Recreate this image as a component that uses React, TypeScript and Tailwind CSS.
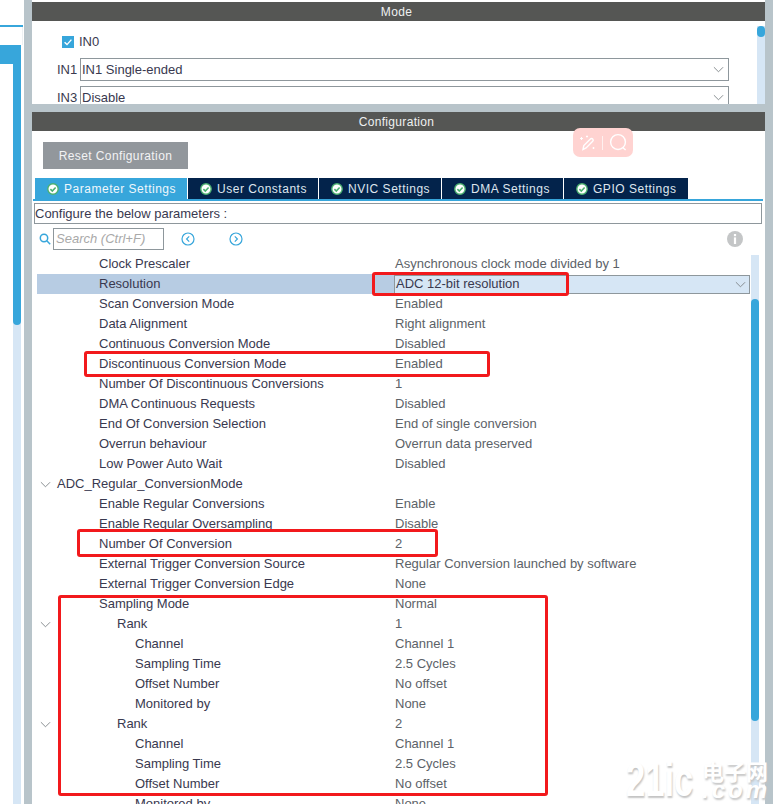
import React from "react";

type RowT = { label: string; value: string; indent: 0 | 1 | 2 | 3; chev?: boolean; selected?: boolean };

const rows: RowT[] = [
  { label: "Clock Prescaler", value: "Asynchronous clock mode divided by 1", indent: 1 },
  { label: "Resolution", value: "ADC 12-bit resolution", indent: 1, selected: true },
  { label: "Scan Conversion Mode", value: "Enabled", indent: 1 },
  { label: "Data Alignment", value: "Right alignment", indent: 1 },
  { label: "Continuous Conversion Mode", value: "Disabled", indent: 1 },
  { label: "Discontinuous Conversion Mode", value: "Enabled", indent: 1 },
  { label: "Number Of Discontinuous Conversions", value: "1", indent: 1 },
  { label: "DMA Continuous Requests", value: "Disabled", indent: 1 },
  { label: "End Of Conversion Selection", value: "End of single conversion", indent: 1 },
  { label: "Overrun behaviour", value: "Overrun data preserved", indent: 1 },
  { label: "Low Power Auto Wait", value: "Disabled", indent: 1 },
  { label: "ADC_Regular_ConversionMode", value: "", indent: 0, chev: true },
  { label: "Enable Regular Conversions", value: "Enable", indent: 1 },
  { label: "Enable Regular Oversampling", value: "Disable", indent: 1 },
  { label: "Number Of Conversion", value: "2", indent: 1 },
  { label: "External Trigger Conversion Source", value: "Regular Conversion launched by software", indent: 1 },
  { label: "External Trigger Conversion Edge", value: "None", indent: 1 },
  { label: "Sampling Mode", value: "Normal", indent: 1 },
  { label: "Rank", value: "1", indent: 2, chev: true },
  { label: "Channel", value: "Channel 1", indent: 3 },
  { label: "Sampling Time", value: "2.5 Cycles", indent: 3 },
  { label: "Offset Number", value: "No offset", indent: 3 },
  { label: "Monitored by", value: "None", indent: 3 },
  { label: "Rank", value: "2", indent: 2, chev: true },
  { label: "Channel", value: "Channel 1", indent: 3 },
  { label: "Sampling Time", value: "2.5 Cycles", indent: 3 },
  { label: "Offset Number", value: "No offset", indent: 3 },
  { label: "Monitored by", value: "None", indent: 3 },
];

const indentClass = { 0: "ml-0", 1: "ml-[42px]", 2: "ml-[60px]", 3: "ml-[78px]" };

function Chevron({ className }: { className: string }) {
  return (
    <svg viewBox="0 0 12 7" className={className} fill="none" stroke="#7f8589" strokeWidth="1">
      <path d="M1 1l5 5 5-5" />
    </svg>
  );
}

function TabCheck() {
  return (
    <svg viewBox="0 0 12 12" className="w-3 h-3 shrink-0">
      <circle cx="6" cy="6" r="5.2" fill="#ffffff" stroke="#4cb070" strokeWidth="1.4" />
      <path d="M3.4 6.1l1.9 1.9 3.3-3.5" fill="none" stroke="#4cb070" strokeWidth="1.6" />
    </svg>
  );
}

function Tab({ label, active, w }: { label: string; active?: boolean; w: string }) {
  return (
    <div
      className={`${w} h-[21px] flex items-center gap-[5px] pl-3 text-[12px] tracking-[0.52px] ${
        active ? "bg-[#37a6db] text-[#eef7fb]" : "bg-[#03234b] text-[#dfe6ee]"
      }`}
    >
      <TabCheck />
      <span className="whitespace-nowrap">{label}</span>
    </div>
  );
}

function ModeSelect({ text }: { text: string }) {
  return (
    <div className="flex-1 h-[23px] border border-[#8e979c] flex items-center justify-between pl-[1px] pr-[4px] shrink-0">
      <span>{text}</span>
      <Chevron className="w-[11px] h-[7px]" />
    </div>
  );
}

function Row({ r }: { r: RowT }) {
  return (
    <div className="flex h-5 items-center shrink-0">
      <div className={`w-[358px] h-5 flex items-center shrink-0 ${r.selected ? "bg-[#b7cce3]" : ""}`}>
        <div className="w-5 shrink-0 pl-[3px]">{r.chev && <Chevron className="w-[11px] h-[7px]" />}</div>
        <span className={`${indentClass[r.indent]} whitespace-nowrap text-[#39394f]`}>{r.label}</span>
      </div>
      {r.selected ? (
        <div className="w-[356px] -ml-[1px] h-[19px] bg-[#d6e6f5] border border-[#8e979c] flex items-center justify-between pl-[1px] pr-[3px] text-[#39394f]">
          <span className="whitespace-nowrap">{r.value}</span>
          <Chevron className="w-[11px] h-[7px]" />
        </div>
      ) : (
        <span className="whitespace-nowrap text-[#5c6268]">{r.value}</span>
      )}
    </div>
  );
}

function RedBox({ className }: { className: string }) {
  return <div className={`absolute border-[3px] border-[#f2191c] rounded-[3px] pointer-events-none ${className}`} />;
}

export default function App() {
  return (
    <div className="relative w-[781px] h-[804px] overflow-hidden bg-white flex font-['Liberation_Sans',Arial,sans-serif] text-[13px] text-[#39394f]">
      {/* left side panel */}
      <div className="w-6 h-full flex flex-col shrink-0">
        <div className="h-[25px] shrink-0" />
        <div className="h-[2px] w-[23px] bg-[#37a6db] shrink-0" />
        <div className="h-[18px] w-[23px] border-r border-[#eef1f3] shrink-0" />
        <div className="h-[19px] w-[21px] bg-[#37a6db] shrink-0" />
        <div className="flex-1 flex">
          <div className="w-[13px]" />
          <div className="w-2 flex flex-col bg-[#d6e6f5]">
            <div className="h-[261px] bg-[#37a6db] rounded-b-[4px]" />
          </div>
        </div>
      </div>
      <div className="w-2 h-full bg-[#b8c4ca] shrink-0" />

      {/* main column */}
      <div className="w-[733px] h-full flex flex-col shrink-0 overflow-hidden">
        {/* Mode */}
        <div className="h-[104px] shrink-0 flex flex-col pt-[2px] overflow-hidden">
          <div className="h-[19px] bg-[#555654] text-[#eef0f0] text-[12px] tracking-[0.32px] pr-[4px] flex items-center justify-center shrink-0">
            Mode
          </div>
          <div className="flex-1 flex min-h-0">
            <div className="flex-1 flex flex-col overflow-hidden min-w-0 pt-[15px] pl-[25px] pr-[28px]">
              <div className="flex items-center h-[12px] ml-[5px] gap-[5px] shrink-0">
                <div className="w-3 h-3 bg-[#37a6db] flex items-center justify-center">
                  <svg viewBox="0 0 12 12" className="w-3 h-3" fill="none" stroke="#ffffff" strokeWidth="1.4">
                    <path d="M2.6 6.2l2.4 2.4 4.4-5" />
                  </svg>
                </div>
                <span>IN0</span>
              </div>
              <div className="flex items-center gap-[3px] mt-[10px] shrink-0">
                <span className="w-5 whitespace-nowrap">IN1</span>
                <ModeSelect text="IN1 Single-ended" />
              </div>
              <div className="flex items-center gap-[3px] mt-[5px] shrink-0">
                <span className="w-5 whitespace-nowrap">IN3</span>
                <ModeSelect text="Disable" />
              </div>
            </div>
            <div className="w-2 mt-[5px] bg-[#d6e6f5] shrink-0">
              <div className="h-[11px] bg-[#37a6db] rounded-full" />
            </div>
          </div>
        </div>
        <div className="h-2 bg-[#b8c4ca] shrink-0" />

        {/* Configuration */}
        <div className="h-[19px] bg-[#555654] text-[#eef0f0] text-[12px] tracking-[0.32px] pr-[4px] flex items-center justify-center shrink-0">
          Configuration
        </div>
        <div className="flex-1 flex flex-col min-h-0 overflow-hidden">
          <div className="ml-[11px] mt-[11px] w-[145px] h-[27px] bg-[#92979c] text-[#f2f3f4] text-[12px] tracking-[0.4px] flex items-center justify-center shrink-0">
            Reset Configuration
          </div>
          <div className="flex ml-[3px] mt-[9px] gap-[1px] shrink-0">
            <Tab label="Parameter Settings" active w="w-[152px]" />
            <Tab label="User Constants" w="w-[130px]" />
            <Tab label="NVIC Settings" w="w-[122px]" />
            <Tab label="DMA Settings" w="w-[121px]" />
            <Tab label="GPIO Settings" w="w-[124px]" />
          </div>
          <div className="ml-[1px] w-[730px] h-[2px] bg-[#37a6db] shrink-0" />
          <div className="ml-[2px] w-[728px] h-[21px] mt-[2px] border border-[#8e979c] flex items-center text-[#39394f] shrink-0">
            Configure the below parameters :
          </div>
          <div className="h-[25px] flex items-center shrink-0 mt-[2px]">
            <svg viewBox="0 0 12 12" className="w-3 h-3 ml-[7px]" fill="none" stroke="#37a6db" strokeWidth="1.5">
              <circle cx="5" cy="5" r="3.7" />
              <path d="M7.8 7.8l3.4 3.4" />
            </svg>
            <div className="w-[111px] h-[22px] ml-[2px] border border-[#8e979c] flex items-center pl-[2px] italic text-[#a9a9a9]">
              Search (Ctrl+F)
            </div>
            <svg viewBox="0 0 14 14" className="w-[14px] h-[14px] ml-[17px]" fill="none" stroke="#37a6db" strokeWidth="1.2">
              <circle cx="7" cy="7" r="6" />
              <path d="M8.2 4.4L5.6 7l2.6 2.6" />
            </svg>
            <svg viewBox="0 0 14 14" className="w-[14px] h-[14px] ml-[34px]" fill="none" stroke="#37a6db" strokeWidth="1.2">
              <circle cx="7" cy="7" r="6" />
              <path d="M5.8 4.4L8.4 7l-2.6 2.6" />
            </svg>
            <svg viewBox="0 0 16 16" className="w-4 h-4 ml-[484px]">
              <circle cx="8" cy="8" r="8" fill="#c4c6c7" />
              <rect x="6.9" y="3" width="2.2" height="2.2" fill="#ffffff" />
              <rect x="6.9" y="6.4" width="2.2" height="6.6" fill="#ffffff" />
            </svg>
          </div>
          <div className="flex-1 flex min-h-0 ml-[5px] mt-[3px] overflow-hidden">
            <div className="w-[714px] flex flex-col shrink-0 text-[#39394f]">
              {rows.map((r, i) => (
                <Row key={i} r={r} />
              ))}
            </div>
            <div className="w-2 mt-[1px] bg-[#d6e6f5] shrink-0 flex flex-col">
              <div className="h-[44px]" />
              <div className="h-[422px] bg-[#37a6db] rounded-[4px]" />
            </div>
          </div>
        </div>
      </div>
      <div className="w-2 h-full bg-[#b8c4ca] shrink-0" />

      {/* annotation overlays */}
      <RedBox className="left-[372px] top-[272px] w-[197px] h-[24px]" />
      <RedBox className="left-[84px] top-[351px] w-[406px] h-[26px]" />
      <RedBox className="left-[77px] top-[529px] w-[361px] h-[28px]" />
      <RedBox className="left-[58px] top-[595px] w-[490px] h-[201px]" />

      {/* floating toolbar */}
      <div className="absolute left-[573px] top-[128px] w-[60px] h-[29px] rounded-[7px] bg-[#ffd3d1] flex items-center justify-center gap-[6px]">
        <svg viewBox="0 0 18 18" className="w-[18px] h-[18px]" fill="none" stroke="#ffffff" strokeWidth="1.4">
          <path d="M5 15.5l.8-4L12.4 5a1.6 1.6 0 0 1 2.3 2.3l-6.6 6.6z" />
          <path d="M3.5 3v3M2 4.5h3M9 1.5v2M8 2.5h2M15.5 13v2M14.5 14h2" strokeWidth="1" />
        </svg>
        <div className="w-px h-[14px] bg-[#fff0ef]" />
        <svg viewBox="0 0 20 20" className="w-[19px] h-[19px]" fill="none" stroke="#ffffff" strokeWidth="1.5">
          <circle cx="9.5" cy="9.5" r="7.8" />
          <path d="M14.5 15.2l3 2.8" />
        </svg>
      </div>

      {/* watermark */}
      <div className="absolute left-[626px] top-[759px] flex items-start text-white [text-shadow:1px_2px_2px_#c4c4c4]">
        <span className="font-bold text-[48px] leading-[42px] w-[76px] scale-x-[0.72] origin-left">21ic</span>
        <div className="flex flex-col">
          <span className="font-['Noto_Sans_CJK_SC',sans-serif] font-bold text-[22px] leading-[22px]">电子网</span>
          <span className="font-bold italic text-[24px] leading-[17px] tracking-[3px]">.com</span>
        </div>
      </div>
    </div>
  );
}
